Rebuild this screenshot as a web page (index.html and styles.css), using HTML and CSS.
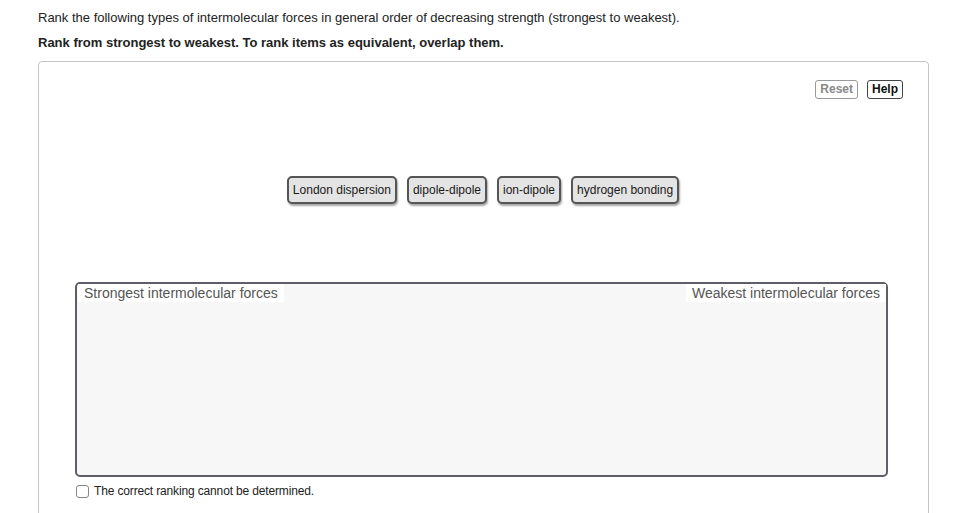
FILE: index.html
```html
<!DOCTYPE html>
<html>
<head>
<meta charset="utf-8">
<link rel="stylesheet" href="styles.css">
</head>
<body>
<div class="page">
  <p class="prompt">Rank the following types of intermolecular forces in general order of decreasing strength (strongest to weakest).</p>
  <p class="instr">Rank from strongest to weakest. To rank items as equivalent, overlap them.</p>
  <div class="panel">
    <div class="tools">
      <button class="btn reset">Reset</button>
      <button class="btn help">Help</button>
    </div>
    <div class="items">
      <div class="item">London dispersion</div>
      <div class="item">dipole-dipole</div>
      <div class="item">ion-dipole</div>
      <div class="item">hydrogen bonding</div>
    </div>
    <div class="rankbox">
      <span class="lbl">Strongest intermolecular forces</span>
      <span class="lbl">Weakest intermolecular forces</span>
    </div>
    <label class="cant"><span class="cb"></span>The correct ranking cannot be determined.</label>
  </div>
</div>
</body>
</html>
```
FILE: styles.css
```css
html, body { margin: 0; padding: 0; background: #fff; }
body { font-family: "Liberation Sans", Arial, sans-serif; color: #222; }
.page { padding: 11px 0 0 38px; width: 891px; }
.prompt { margin: 0; font-size: 13px; line-height: 14px; }
.instr { margin: 11px 0 0; font-size: 13px; line-height: 14px; font-weight: bold; }
.panel {
  margin-top: 11px;
  border: 1px solid #c4c4c4;
  border-radius: 4px 4px 0 0;
  height: 470px;
  box-sizing: border-box;
  padding: 18px 25px 0 36px;
}
.tools { display: flex; justify-content: flex-end; gap: 9px; }
.btn {
  font-family: "Liberation Sans", Arial, sans-serif;
  font-size: 12px; font-weight: bold;
  height: 19px; padding: 0 4px; line-height: 15px;
  background: #fff; border-radius: 3px; cursor: pointer;
}
.reset { color: #888; border: 1px solid #999; }
.help { color: #111; border: 1px solid #444; }
.items {
  display: flex; justify-content: center; gap: 10px;
  margin: 77px 0 0 0;
  position: relative; left: -6px;
}
.item {
  font-size: 12px; line-height: 14px; color: #1a1a1a;
  padding: 5px 4px;
  background: #e4e4e4;
  border: 2px solid #555;
  border-radius: 5px;
  box-shadow: 1px 2px 2px rgba(0,0,0,0.35);
}
.rankbox {
  margin-top: 78px;
  width: 813px; height: 195px; box-sizing: border-box;
  border: 2px solid #5e5e66;
  border-radius: 5px;
  background: #f7f7f7;
  display: flex; justify-content: space-between; align-items: flex-start;
  padding: 0 0 0 1px;
}
.lbl {
  background: #fff; color: #555; font-size: 14px; line-height: 18px;
  padding: 0 6px;
}
.cant {
  display: flex; align-items: center; gap: 5px;
  margin-top: 7px; margin-left: 1px;
  font-size: 12px; color: #222; letter-spacing: -0.15px;
}
.cb {
  width: 11px; height: 11px; border: 1px solid #888; border-radius: 3px; background: #fff;
}
```
